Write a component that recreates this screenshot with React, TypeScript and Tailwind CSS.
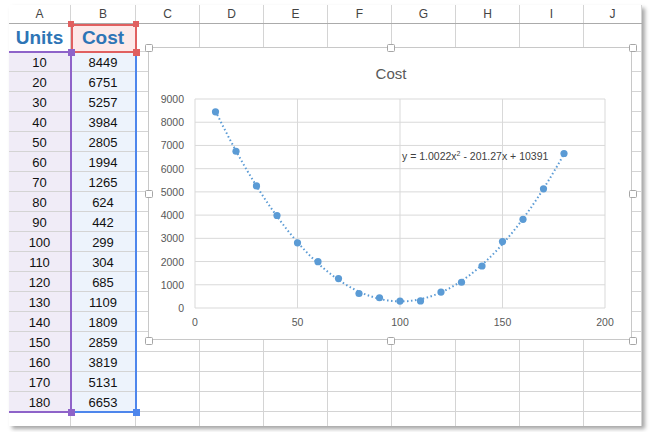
const cols = [
  { n: "A", w: 62 },
  { n: "B", w: 65 },
  { n: "C", w: 64 },
  { n: "D", w: 64 },
  { n: "E", w: 64 },
  { n: "F", w: 64 },
  { n: "G", w: 64 },
  { n: "H", w: 64 },
  { n: "I", w: 64 },
  { n: "J", w: 58 },
];

const data: [number, number][] = [
  [10, 8449], [20, 6751], [30, 5257], [40, 3984], [50, 2805], [60, 1994],
  [70, 1265], [80, 624], [90, 442], [100, 299], [110, 304], [120, 685],
  [130, 1109], [140, 1809], [150, 2859], [160, 3819], [170, 5131], [180, 6653],
];

const px = (x: number) => 46 + x * 2.05;
const py = (y: number) => 260 - (y * 209) / 9000;

function Chart() {
  const trend: string[] = [];
  for (let x = 10; x <= 180; x += 2) {
    const y = 1.0022 * x * x - 201.27 * x + 10391;
    trend.push(`${px(x).toFixed(1)},${py(y).toFixed(1)}`);
  }
  const handles = [
    [0, 0], [242, 0], [484, 0], [0, 146], [484, 146], [0, 293], [242, 293], [484, 293],
  ];
  return (
    <div className="absolute left-[139px] top-[42px] h-[293px] w-[484px] border border-[#c8c8c8] bg-white">
      <svg width="484" height="293" className="absolute left-0 top-0 overflow-visible" style={{ fontFamily: "Liberation Sans, sans-serif" }}>
        <text x="242" y="31" textAnchor="middle" fontSize="15" fill="#595959">Cost</text>
        {[0, 1000, 2000, 3000, 4000, 5000, 6000, 7000, 8000, 9000].map((v) => (
          <g key={v}>
            <line x1={46} x2={456} y1={py(v)} y2={py(v)} stroke="#d9d9d9" />
            <text x="35" y={py(v) + 4} textAnchor="end" fontSize="10.5" fill="#595959">{v}</text>
          </g>
        ))}
        {[0, 50, 100, 150, 200].map((v) => (
          <g key={v}>
            <line x1={px(v)} x2={px(v)} y1={py(9000)} y2={py(0)} stroke="#d9d9d9" />
            <text x={px(v)} y="278" textAnchor="middle" fontSize="10.5" fill="#595959">{v}</text>
          </g>
        ))}
        <polyline points={trend.join(" ")} fill="none" stroke="#5b9bd5" strokeWidth="2" strokeDasharray="1.5 2.5" />
        {data.map(([x, y]) => (
          <circle key={x} cx={px(x)} cy={py(y)} r="3.6" fill="#5b9bd5" />
        ))}
        <text x="253" y="112" fontSize="10.5" fill="#404040">
          y = 1.0022x<tspan dy="-4" fontSize="7">2</tspan><tspan dy="4"> - 201.27x + 10391</tspan>
        </text>
        {handles.map(([x, y], i) => (
          <rect key={i} x={x - 3.5} y={y - 3.5} width="7" height="7" rx="1" fill="white" stroke="#a6a6a6" />
        ))}
      </svg>
    </div>
  );
}

export default function App() {
  return (
    <div className="h-[432px] w-[656px] overflow-hidden bg-white" style={{ fontFamily: "Liberation Sans, sans-serif" }}>
      <div className="relative ml-[9px] mt-[5px] h-[421px] w-[633px] overflow-hidden bg-white shadow-[3px_3px_4px_rgba(0,0,0,0.35)]">
        <div className="flex h-[19px] border-b border-[#ababab]">
          {cols.map((c) => (
            <div key={c.n} style={{ width: c.w }} className="flex shrink-0 items-center justify-center border-r border-[#d4d4d4] text-[12px] text-[#444]">
              {c.n}
            </div>
          ))}
        </div>
        <div className="flex h-[28px] border-b border-[#d4d4d4]">
          {cols.map((c, i) => (
            <div key={c.n} style={{ width: c.w }} className={`flex shrink-0 items-center justify-center border-r border-[#d4d4d4] pt-[2px] text-[19px] font-bold text-[#2e75b6] ${i === 1 ? "bg-[#fde9e9]" : ""}`}>
              {i === 0 ? "Units" : i === 1 ? "Cost" : ""}
            </div>
          ))}
        </div>
        {[...data, [0, 0] as [number, number]].map(([u, c], r) => (
          <div key={r} className="flex h-[20px] border-b border-[#d4d4d4]">
            {cols.map((col, i) => (
              <div key={col.n} style={{ width: col.w }} className={`flex shrink-0 items-center justify-center border-r border-[#d4d4d4] pt-[2px] text-[13px] text-[#111] ${r < 18 && i === 0 ? "bg-[#f0ecf7]" : ""} ${r < 18 && i === 1 ? "bg-[#edf3fc]" : ""}`}>
                {r < 18 && i === 0 ? u : r < 18 && i === 1 ? c : ""}
              </div>
            ))}
          </div>
        ))}
        <div className="absolute left-0 top-[46px] h-[362px] w-[63px] border-2 border-l-0 border-[#8e63c9]" />
        <div className="absolute left-[62px] top-[46px] h-[362px] w-[66px] border-2 border-l-0 border-[#4e86ec]" />
        <div className="absolute left-[62px] top-[19px] h-[29px] w-[66px] border-2 border-[#e06060]" />
        <div className="absolute left-[59px] top-[44px] h-[7px] w-[7px] bg-[#8e63c9]" />
        <div className="absolute left-[59px] top-[404px] h-[7px] w-[7px] bg-[#8e63c9]" />
        <div className="absolute left-[124px] top-[404px] h-[7px] w-[7px] bg-[#4e86ec]" />
        <div className="absolute left-[124px] top-[44px] h-[7px] w-[7px] bg-[#e06060]" />
        <div className="absolute left-[59px] top-[16px] h-[6px] w-[6px] bg-[#e06060]" />
        <div className="absolute left-[124px] top-[16px] h-[6px] w-[6px] bg-[#e06060]" />
        <Chart />
      </div>
    </div>
  );
}
